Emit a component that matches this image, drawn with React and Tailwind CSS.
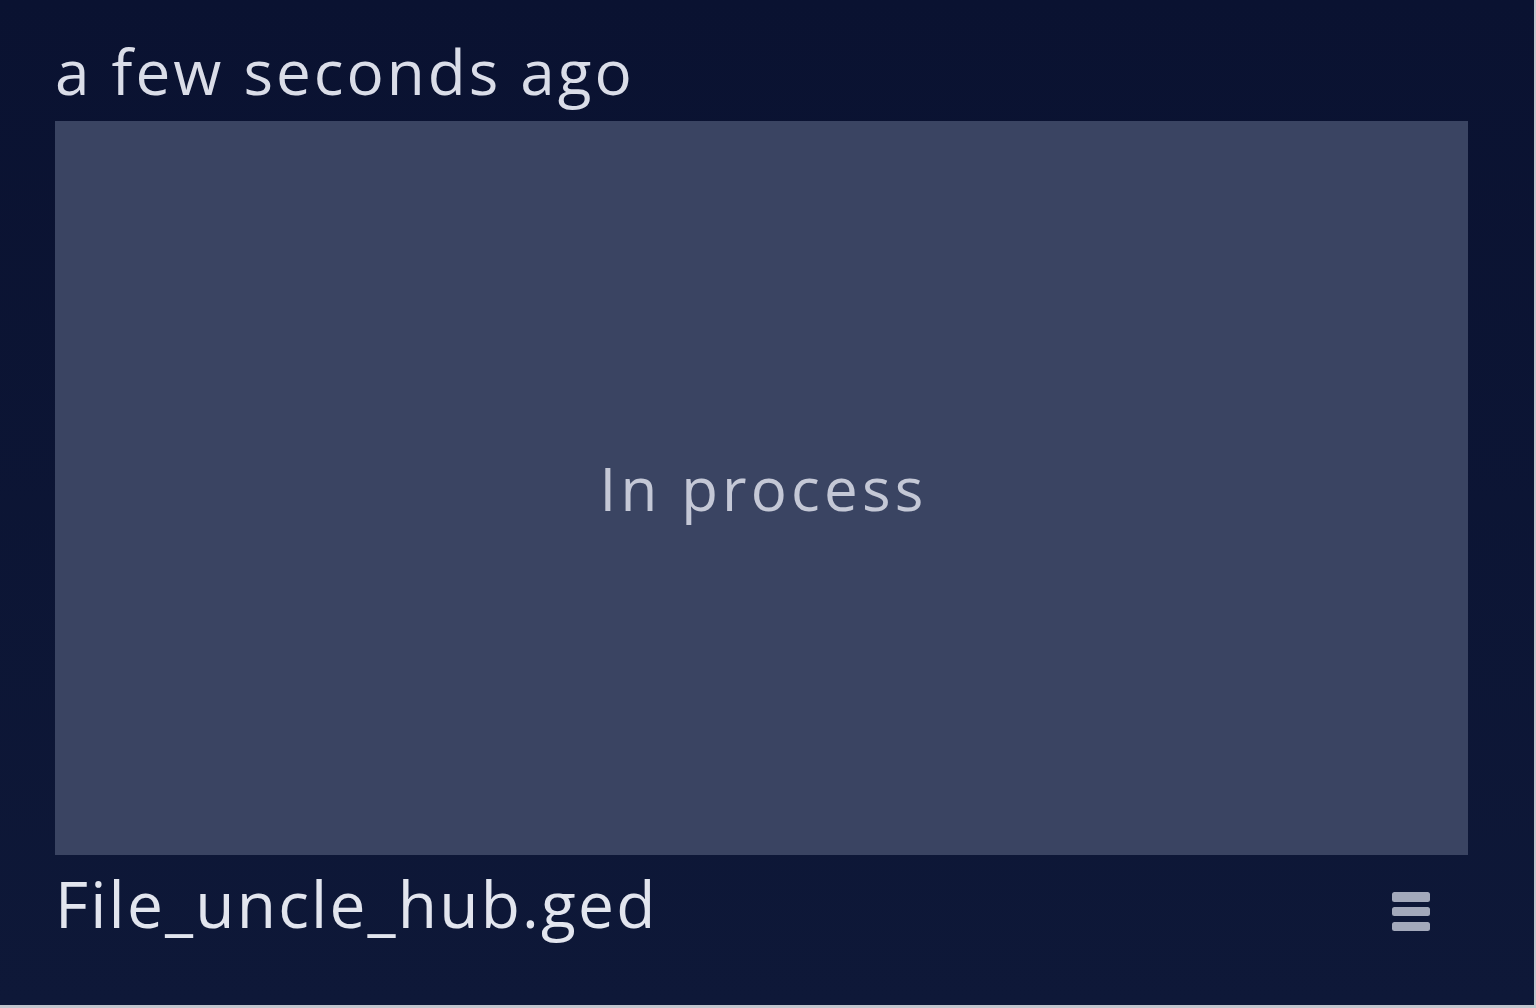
import React from "react";

function MenuIcon() {
  return (
    <svg width="40" height="40" viewBox="0 0 40 40" className="block">
      <rect x="1" y="0" width="38" height="10" rx="2.5" fill="#a3a9bb" />
      <rect x="1" y="15" width="38" height="9" rx="2.5" fill="#a3a9bb" />
      <rect x="1" y="30" width="38" height="9" rx="2.5" fill="#a3a9bb" />
    </svg>
  );
}

export default function App() {
  return (
    <div className="w-[1536px] h-[1008px] bg-[#c3c6cd] overflow-hidden" style={{ fontFamily: "'Open Sans', 'Noto Sans', sans-serif" }}>
      <div className="w-[1534px] h-[1005px] bg-gradient-to-b from-[#0a1231] to-[#0e1838] pl-[55px] pr-[66px] flex flex-col">
        <div className="h-[121px] flex items-end pb-[19px]">
          <span className="text-[#dadde8] text-[62px] font-medium leading-none tracking-[3px]">a few seconds ago</span>
        </div>
        <div className="h-[734px] bg-[#3a4462] flex items-center justify-center">
          <span className="text-[#c4c8d6] text-[60px] font-medium leading-none tracking-[4.2px] pl-[4px]">In process</span>
        </div>
        <div className="flex items-start justify-between h-[150px] pt-[17px]">
          <span className="text-[#e2e5ee] text-[64px] font-medium leading-none tracking-[2.2px]">File_uncle_hub.ged</span>
          <div className="mr-[37px] mt-[20px]">
            <MenuIcon />
          </div>
        </div>
      </div>
    </div>
  );
}
